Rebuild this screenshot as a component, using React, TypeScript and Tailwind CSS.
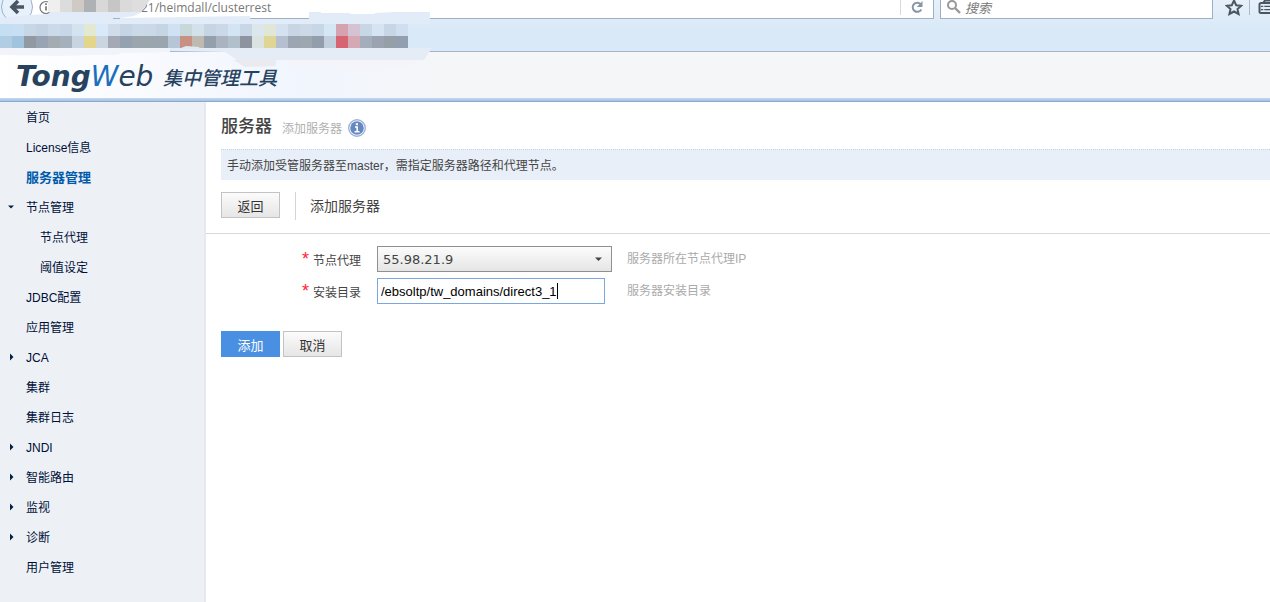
import React, { useState } from 'react';

interface NavItem {
  label: string;
  active?: boolean;
  state?: 'open' | 'closed';
  child?: boolean;
}

const NAV: NavItem[] = [
  { label: '首页' },
  { label: 'License信息' },
  { label: '服务器管理', active: true },
  { label: '节点管理', state: 'open' },
  { label: '节点代理', child: true },
  { label: '阈值设定', child: true },
  { label: 'JDBC配置' },
  { label: '应用管理' },
  { label: 'JCA', state: 'closed' },
  { label: '集群' },
  { label: '集群日志' },
  { label: 'JNDI', state: 'closed' },
  { label: '智能路由', state: 'closed' },
  { label: '监视', state: 'closed' },
  { label: '诊断', state: 'closed' },
  { label: '用户管理' },
];

// Pixelated bookmarks bar, one colour per 12px block
const MOSAIC_TOP = [
  '#c5dff2', '#c8dff3', '#c8d7e5', '#c3d3e3', '#cbdaea', '#c8d7e8', '#d3e3f0', '#e2e8d2', '#d9e9f9',
  '#d0dcea', '#c6d5e3', '#cbdae7', '#cbd9e6', '#c6d5e3', '#cfe1f2', '#c8d8da', '#d3e1ea', '#c5d5e4',
  '#cbd8e7', '#d3e5f4', '#c8d7e5', '#dbe7ec', '#e0e7d6', '#d3e1f0', '#c8d5e2', '#cdd9e6', '#c8d7e5',
  '#d5e6f5', '#d5a2b0', '#d5c2d3', '#c8d7e6', '#d5e3f2', '#c6d6e4', '#cfdff0',
];

const MOSAIC_BOTTOM = [
  '#b0cde4', '#a0c4de', '#9299a2', '#98a3b3', '#a3abb3', '#a5b0bd', '#c8d5e0', '#e3d58b', '#cbd5e0',
  '#a5a9b5', '#94a1b0', '#9ba5ae', '#9ba5ae', '#9ba5b0', '#b7c6d6', '#c88f83', '#bfbab0', '#949fac',
  '#a9b4c0', '#b2c0cc', '#8d949f', '#dae3df', '#dfd595', '#b5bfcf', '#9ba6b2', '#9ca7b0', '#929eac',
  '#c1cedb', '#d76571', '#d4a9b3', '#a3adbb', '#9ba2b0', '#949fa8', '#929fb1',
];

const URL_BLOCKS = ['#efefef', '#dcdcdc', '#cfcac5', '#aeb2b5', '#d8d8d8', '#c6c6c6', '#dadada'];

const Mosaic = () => (
  <svg className="absolute left-0 top-0 pointer-events-none" width="450" height="76" viewBox="0 0 450 76" aria-hidden="true">
    <path d="M0 18 L30 15 L48 14 L50 12 L142 12 L134 16 L120 18 L250 16 L250 19 L309 19 L309 12 L321 12 L321 13 L350 13 L350 14 L375 14 L375 13 L394 12 L430 12 L430 24 L0 24Z" fill="#e2ecf8" />
    <path d="M113 18.5 H120" stroke="#9bb4d0" />
    <path d="M0 48 L170 48 L170 52 L122 53 L116 55 L90 55 L60 56 L0 55Z" fill="#f1f4fb" />
    <path d="M170 48 L432 48 L424 60 L237 60 L225 52 L170 51Z" fill="#e5ecf6" />
    <path d="M233 60 L276 60 L276 66 L245 67Z" fill="#e9ebf0" />
    <path d="M288 60 L424 60 L412 66 L372 71 L336 71 L330 66 L288 66Z" fill="#f3f5fb" />
    {URL_BLOCKS.map((c, i) => (
      <rect key={i} x={48 + i * 12} y="0" width="12" height="12" fill={c} />
    ))}
    <path d="M132 0 H150 L141 12 H132Z" fill="#dedede" />
    {MOSAIC_TOP.map((c, i) => <rect key={i} x={i * 12} y="24" width="12" height="12" fill={c} />)}
    {MOSAIC_BOTTOM.map((c, i) => <rect key={i} x={i * 12} y="36" width="12" height="12" fill={c} />)}
    <path d="M181 48 L186 46 L199 47 L200 49 L181 49Z" fill="#dfe8f5" />
  </svg>
);

const BrowserBar = () => (
  <div className="relative h-13 border-b border-[#a5b3d0] bg-linear-to-b from-[#e6f0fa] to-[#d9e9f7] to-60%">
    <div className="flex h-[19px] overflow-hidden">
      <div className="flex flex-1 min-w-0 border-r border-b border-[#9db0c8] bg-white">
        <button type="button" aria-label="Back" className="flex-none">
          <svg width="36" height="18" viewBox="0 0 36 18">
            <rect width="18" height="18" fill="#e3effa" />
            <circle cx="17" cy="7" r="15.5" fill="#e6f1fc" stroke="#9db0c8" />
            <path d="M24 7 H12 M18 1 L12 7 L18 13" fill="none" stroke="#4b5663" strokeWidth="3.6" />
          </svg>
        </button>
        <svg className="flex-none ml-0.5" width="16" height="16" viewBox="0 0 16 16">
          <circle cx="8" cy="7.5" r="6" fill="none" stroke="#777" strokeWidth="1.2" />
          <path d="M8 6.2 V10.5 M8 3.2 V5" stroke="#777" strokeWidth="1.7" />
        </svg>
        <span className="flex-1 min-w-0 pl-[87px] font-['Open_Sans',sans-serif] text-[12px] leading-[15px] text-[#777]">21/heimdall/clusterrest</span>
        <button type="button" aria-label="Reload" className="flex-none flex w-[33px] h-[15px] justify-center border-l border-[#d5dae0]">
          <svg width="14" height="14" viewBox="0 0 14 14">
            <path d="M11 4.5 A4.6 4.6 0 1 0 11.3 9.5" fill="none" stroke="#8797a8" strokeWidth="2" />
            <path d="M12.5 1 V7 H6.8Z" fill="#8797a8" />
          </svg>
        </button>
      </div>
      <div className="flex w-[273px] ml-1.5 border-x border-b border-[#9db0c8] bg-white">
        <svg className="flex-none ml-1.5" width="14" height="15" viewBox="0 0 14 15">
          <circle cx="5" cy="5" r="4" fill="none" stroke="#999" strokeWidth="2" />
          <path d="M8 8 L13 13" stroke="#999" strokeWidth="2.4" />
        </svg>
        <input aria-label="搜索" placeholder="搜索" className="flex-1 min-w-0 h-4 pl-1 font-['Noto_Sans_CJK_SC',sans-serif] text-[13px] leading-4 italic outline-none placeholder:text-[#777]" />
      </div>
      <button type="button" aria-label="Bookmark" className="flex-none flex w-9 pl-3">
        <svg width="18" height="16" viewBox="0 0 18 16">
          <path d="M9 0.5 L11.2 5.2 L16.2 5.7 L12.5 9.1 L13.6 14 L9 11.5 L4.4 14 L5.5 9.1 L1.8 5.7 L6.8 5.2Z" fill="none" stroke="#4b5663" strokeWidth="2" />
        </svg>
      </button>
      <button type="button" aria-label="Bookmarks list" className="flex-none flex w-[21px] h-[15px] pl-2 border-l border-[#a9bacb]">
        <svg width="12" height="15" viewBox="0 0 12 15">
          <path d="M12 3 H3 Q1.5 3 1.5 4.5 V11.5 Q1.5 13 3 13 H12 M5 3 L7 0.5 H12" fill="none" stroke="#4b5663" strokeWidth="2" />
          <path d="M3 6.3 H12 M3 9.7 H12" stroke="#4b5663" strokeWidth="1.2" />
          <path d="M5.8 5 V11" stroke="#e2eefa" strokeWidth="1" />
        </svg>
      </button>
    </div>
    <Mosaic />
  </div>
);

const Header = () => (
  <header>
    <div className="flex items-center h-[46px] pl-4 pt-1 bg-linear-to-r from-white via-[#f1f5fd] via-[300px] to-[#f5f6f8] to-[440px] whitespace-nowrap">
      <h1 className="relative flex items-center text-[#27425f]">
        <span className="w-[147px] font-['DejaVu_Sans',sans-serif] text-[28px] leading-8 italic">
          <b>Tong</b><span className="text-[#1a70bc]">W</span>eb
        </span>
        <span className="font-['Noto_Sans_CJK_SC',sans-serif] text-[19px] leading-8 font-medium italic">集中管理工具</span>
      </h1>
    </div>
    <div className="h-1 border-b border-[#8ea9d0] bg-linear-to-b from-[#c3d9ee] to-[#a5c2e6]" />
  </header>
);

const Sidebar = () => (
  <nav className="flex-none w-[206px] border-r-2 border-[#e6e9f3] bg-[#edf1f6]">
    <ul>
      {NAV.map(item => (
        <li key={item.label} className="flex items-center h-[30px] pl-2">
          <span className="flex-none w-[18px]">
            {item.state && (
              <svg width="8" height="8" viewBox="0 0 8 8">
                <path d={item.state === 'open' ? 'M0 2.5 H6 L3 5.5Z' : 'M2 0.5 L5.5 4 L2 7.5Z'} fill="#002244" />
              </svg>
            )}
          </span>
          <a href="#" className={item.active ? 'pt-0.5 font-bold text-[13px] text-[#005baa]' : item.child ? 'pl-3.5 pt-0.5 text-[#000f38]' : 'pt-0.5 text-[#000f38]'}>
            {item.label}
          </a>
        </li>
      ))}
    </ul>
  </nav>
);

const InfoIcon = () => (
  <svg width="18" height="18" viewBox="0 0 18 18">
    <circle cx="9" cy="9" r="8.3" fill="#fff" stroke="#9db4d8" strokeWidth="1.4" />
    <circle cx="9" cy="9" r="6.8" fill="#6688c0" />
    <path d="M7 8 H9.2 V12.5 M6.5 12.8 H11.5" fill="none" stroke="#fff" strokeWidth="1.6" />
    <rect x="7.8" y="4.2" width="2.2" height="2" fill="#fff" />
  </svg>
);

const GrayButton = ({ children }: { children: React.ReactNode }) => (
  <button type="button" className="w-[59px] h-[26px] pt-1 border border-[#c3c3c3] bg-linear-to-b from-[#fbfbfb] to-[#e6e6e6] text-[13px] leading-5 text-[#333]">
    {children}
  </button>
);

const Field = ({ id, label, hint, children }: { id: string; label: string; hint: string; children: React.ReactNode }) => (
  <div className="flex items-center h-[26px]">
    <label htmlFor={id} className="flex items-center w-[156px] pr-4 justify-end text-[#444]">
      <span className="mr-1 text-[18px] leading-5 text-[#ff2233]">*</span>
      <span className="pt-1">{label}</span>
    </label>
    <div className="w-[250px]">{children}</div>
    <span className="text-[#aaa]">{hint}</span>
  </div>
);

export default function App() {
  const [path, setPath] = useState('/ebsoltp/tw_domains/direct3_1');

  return (
    <div className="flex flex-col min-h-screen bg-white font-['Liberation_Sans','Noto_Sans_CJK_SC',sans-serif] text-xs">
      <BrowserBar />
      <Header />
      <div className="flex flex-1">
        <Sidebar />
        <main className="flex-1 min-w-0">
          <div className="pl-[15px]">
            <div className="flex items-center h-[47px] pt-1">
              <h2 className="text-[17px] font-medium text-[#444]">服务器</h2>
              <span className="ml-2.5 mr-1.5 pt-0.5 text-[#b0b0b0]">添加服务器</span>
              <InfoIcon />
            </div>
            <p className="flex items-center h-[31px] pl-1.5 pt-0.5 border-t border-dotted border-[#c8d4df] bg-[#e9eff8] text-[#444]">
              手动添加受管服务器至master，需指定服务器路径和代理节点。
            </p>
          </div>
          <div className="flex h-[54px] pl-[15px] pt-3 border-b border-[#d9d9d9]">
            <GrayButton>返回</GrayButton>
            <h3 className="h-7 ml-[15px] pl-3.5 border-l border-[#d5d5d5] text-[14px] leading-7 text-[#444]">添加服务器</h3>
          </div>
          <form className="pl-[15px] pt-3" onSubmit={e => e.preventDefault()}>
            <div className="flex flex-col gap-1.5">
              <Field id="agent" label="节点代理" hint="服务器所在节点代理IP">
                <div className="relative w-[235px]">
                  <select id="agent" className="block appearance-none w-full h-[26px] pl-[5px] pt-0.5 border border-[#909090] bg-linear-to-b from-[#fcfcfc] to-[#e5e5e5] font-['DejaVu_Sans',sans-serif] text-[13px] text-[#444]">
                    <option>55.98.21.9</option>
                  </select>
                  <svg className="absolute right-2.5 top-2.5 pointer-events-none" width="7" height="6" viewBox="0 0 7 6">
                    <path d="M0 1.5 H7 L3.5 5Z" fill="#444" />
                  </svg>
                </div>
              </Field>
              <Field id="dir" label="安装目录" hint="服务器安装目录">
                <div className="relative w-[228px]">
                  <input
                    id="dir"
                    value={path}
                    onChange={e => setPath(e.target.value)}
                    className="peer block w-full h-[26px] px-[3px] border border-[#7ba7dc] bg-white text-[13px] text-black outline-none"
                  />
                  <span className="absolute left-[180px] top-[5px] w-px h-4 bg-black peer-focus:hidden" />
                </div>
              </Field>
            </div>
            <div className="flex gap-[3px] mt-[27px]">
              <button type="submit" className="w-[59px] h-[26px] pt-1 bg-[#4a90e2] text-[13px] leading-5 text-white">添加</button>
              <GrayButton>取消</GrayButton>
            </div>
          </form>
        </main>
      </div>
    </div>
  );
}
